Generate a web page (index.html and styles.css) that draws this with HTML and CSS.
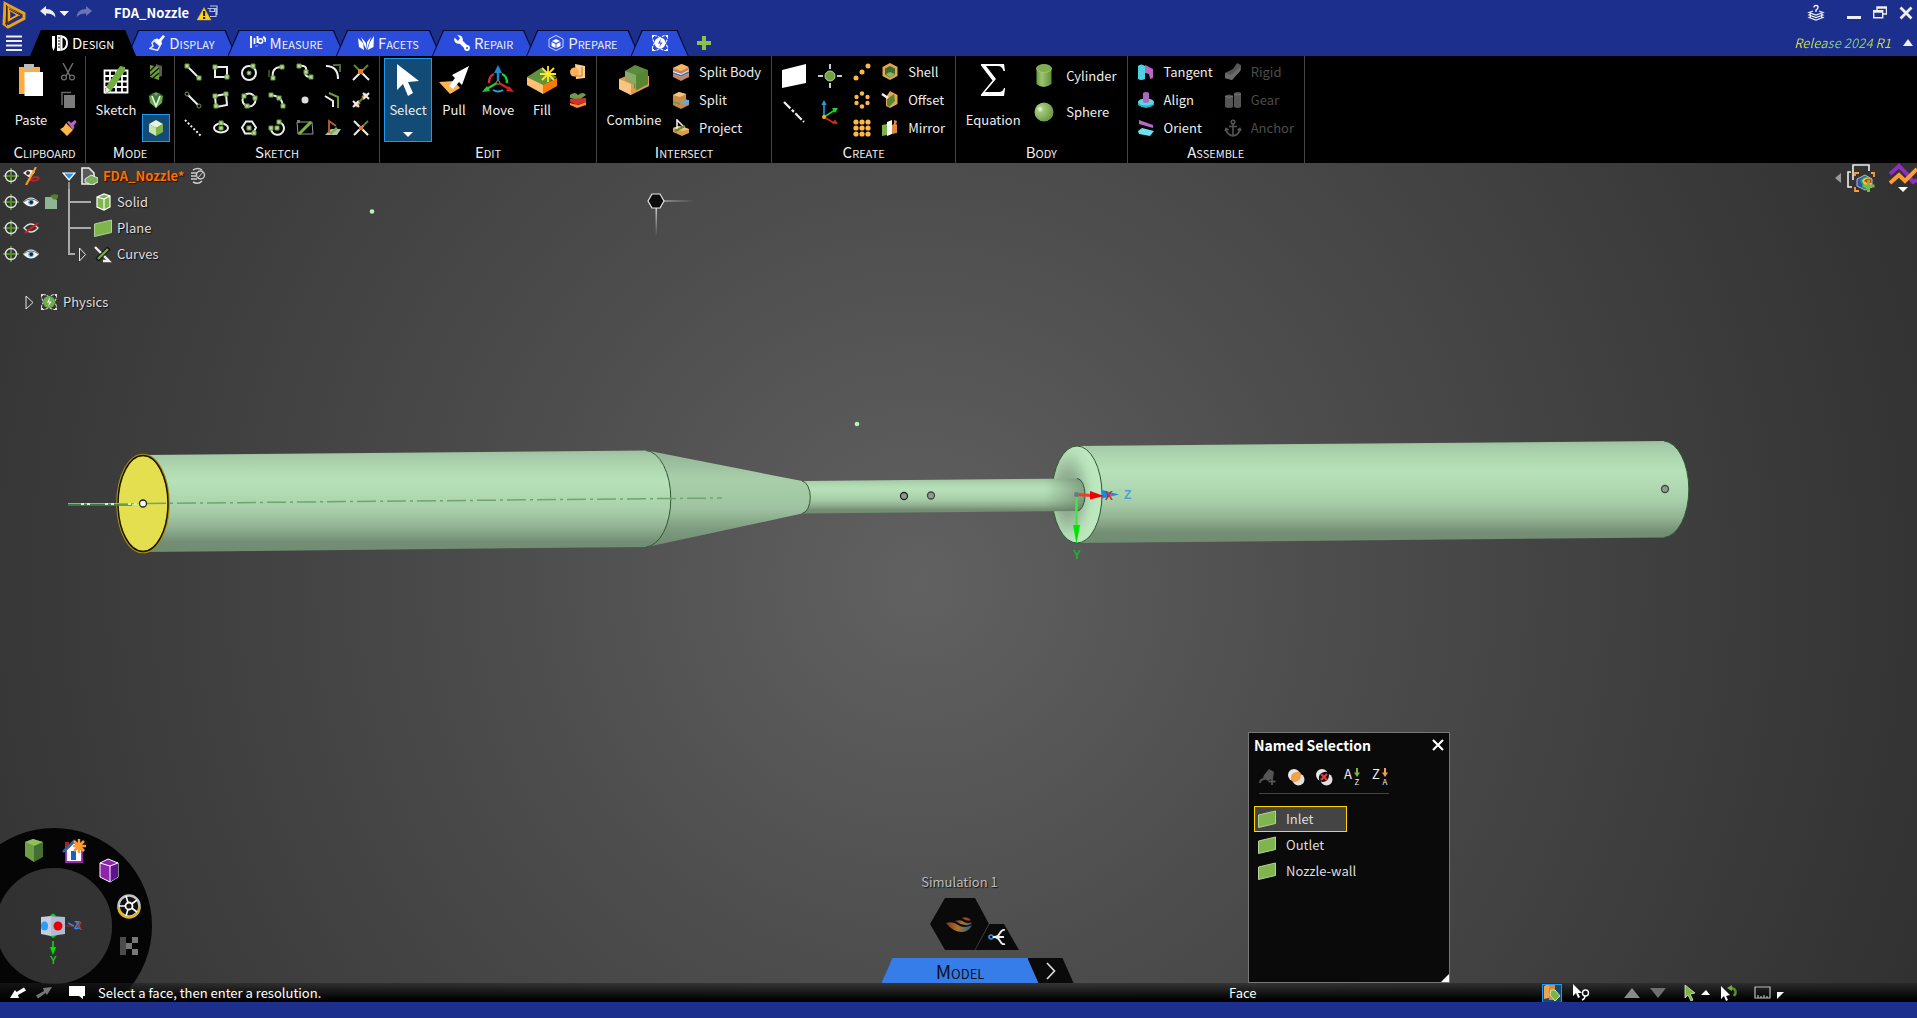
FILE: index.html
```html
<!DOCTYPE html>
<html lang="en">
<head>
<meta charset="utf-8">
<title>FDA_Nozzle</title>
<link rel="stylesheet" href="styles.css">
</head>
<body>
<svg class="defs" aria-hidden="true">
  <symbol id="target" viewBox="0 0 18 18"><path d="M9 1v16M1 9h16" stroke="#558b2f" stroke-width="2"/><circle cx="9" cy="9" r="5.500" fill="none" stroke="#e4e4e4" stroke-width="1.400"/></symbol>
  <symbol id="eye" viewBox="0 0 18 18"><path d="M1 9q8-9 16 0q-8 9-16 0z" fill="#f2f2f2"/><path d="M2 8.500q7-5 14 0" fill="none" stroke="#666" stroke-width="1"/><circle cx="9" cy="9.300" r="2.700" fill="#5aa7d6"/><circle cx="9.300" cy="9.300" r="1.700" fill="#222"/></symbol>
  <symbol id="plane" viewBox="0 0 18 18"><path d="M.5 5L17.500 1v12.500L.5 17.500z" fill="#80b44c" stroke="#b5cf9b" stroke-width="1"/></symbol>
  <symbol id="cursor" viewBox="0 0 24 32"><path d="M1 0v26l6-6 5 12 5-3-5-11 11-1z"/></symbol>
  <symbol id="atom" viewBox="0 0 18 18"><g fill="none" stroke="currentColor" stroke-width="1" stroke-dasharray="3 1"><ellipse cx="9" cy="9" rx="10" ry="4" transform="rotate(45 9 9)"/><ellipse cx="9" cy="9" rx="10" ry="4" transform="rotate(-45 9 9)"/></g><path d="M1 1h2v2H1zM15 1h2v2h-2zM1 15h2v2H1zM15 15h2v2h-2z" fill="currentColor"/></symbol>
</svg>

<header class="top">
  <div class="titlebar">
    <svg class="logo" viewBox="0 0 26 28"><path d="M4 2.500L23 12.500v5L7 26l-4-3z" fill="none" stroke="#e9a21d" stroke-width="3"/><path d="M8 8v11.500L17.500 14z" fill="#1c2f8c" stroke="#f9ab1e" stroke-width="2.500"/><path d="M5.500 4v21M8 8l12 6.500M4 23l14-8" fill="none" stroke="#3a2a10" stroke-width="1"/></svg>
    <button class="tool undo" aria-label="Undo"><svg width="30" height="14" viewBox="0 0 30 14"><path d="M6 0v3q9 0 9.500 8.500Q12 7 6 7.500V10L0 5z" fill="#eee"/><path d="M19.500 5h9.500l-4.700 5z" fill="#fff"/></svg></button>
    <button class="tool redo" aria-label="Redo"><svg width="16" height="14" viewBox="0 0 16 14"><path d="M10 0v3Q1 3 .5 11.500 4 7 10 7.500V10l6-5z" fill="#6975b3"/></svg></button>
    <h1>FDA_Nozzle</h1>
    <svg class="warn" width="22" height="18" viewBox="0 0 22 18"><path d="M10.500 4.500h8.500v8h-6M13 2h7v9M13 4.500v3h4.500v-3" fill="none" stroke="#b7c0e8" stroke-width="1.200"/><path d="M7 3.500L14 16H0z" fill="#ffd21f" stroke="#d8ac00" stroke-width=".5"/><path d="M6 7h2.200v5H6zM6 13h2.200v2H6z" fill="#222"/></svg>
    <div class="window-tools">
      <button class="tool" aria-label="Help"><svg width="18" height="18" viewBox="0 0 18 18"><path d="M7 3.500q0-2 2-2t2 1.700T9 6v2" fill="none" stroke="#eee" stroke-width="1.400"/><path d="M6 7L2 8.500 9 11l7-2.500L12 7M4 10l-2 1 7 2.500L16 11l-2-1M4 12.500l-2 1L9 16l7-2.500-2-1" fill="none" stroke="#eee" stroke-width="1.200"/></svg></button>
      <button class="tool min" aria-label="Minimize"><svg width="14" height="14" viewBox="0 0 14 14"><path d="M0 11.500h14" stroke="#eee" stroke-width="3"/></svg></button>
      <button class="tool" aria-label="Restore"><svg width="14" height="14" viewBox="0 0 14 14"><path d="M4 4V1h9.500v7H10M4 2h9M.7 4.700h9v7h-9zM1 6h9" fill="none" stroke="#eee" stroke-width="1.400"/></svg></button>
      <button class="tool" aria-label="Close"><svg width="14" height="14" viewBox="0 0 14 14"><path d="M1.500 1.500l11 11M12.500 1.500l-11 11" stroke="#eee" stroke-width="2.800"/></svg></button>
    </div>
  </div>
  <nav class="tabs">
    <button class="tool menu" aria-label="Menu"><svg width="16" height="16" viewBox="0 0 16 16"><path d="M0 1.500h16M0 6h16M0 10.500h16M0 15h16" stroke="#eee" stroke-width="2.200"/></svg></button>
    <button class="tab active"><svg width="16" height="16" viewBox="0 0 16 16"><path d="M0 1h3v11l-1.500 4L0 12zM5 0h3.500v16H5z" fill="#fff"/><path d="M6 3h2M6 6h2M6 9h2M6 12h2" stroke="#000"/><path d="M9.500 1.200q5.500 1 5.500 6.800t-5.500 6.800z" fill="none" stroke="#fff" stroke-width="2"/></svg><span>Design</span></button>
    <button class="tab"><svg width="16" height="16" viewBox="0 0 16 16"><path d="M5 5.500l6 5.500-2.500 4.300L1 13.500l3-2.500-1-3z" fill="none" stroke="#e4e9ff" stroke-width="1.500"/><path d="M5 4.500l3-1 2 1L14 0l2 1.500-3.500 4.500.5 3-2 2z" fill="#fff"/></svg><span>Display</span></button>
    <button class="tab"><svg width="16" height="16" viewBox="0 0 16 16"><path d="M1 1v12M4.500 3v6M7.500 1v7" stroke="#fff" stroke-width="1.800"/><circle cx="10.500" cy="6" r="2.200" fill="none" stroke="#fff" stroke-width="1.500"/><path d="M13 2q3 1 2.500 5" fill="none" stroke="#fff" stroke-width="2"/><path d="M5 11h3" stroke="#aab8ff"/></svg><span>Measure</span></button>
    <button class="tab"><svg width="16" height="16" viewBox="0 0 16 16"><path d="M0 3l5 5 1 7-5-3zM16 1l-4 6-2.500 8 6-3zM3 2l5 6 1 7-3-5zM13 2L9 7l0 7 2-6z" fill="#fff"/></svg><span>Facets</span></button>
    <button class="tab"><svg width="16" height="16" viewBox="0 0 16 16"><path d="M5 5l8 8" stroke="#fff" stroke-width="4"/><circle cx="4.500" cy="4.500" r="4.300" fill="#fff"/><path d="M-1 1l3-2 4 4-2 3z" fill="#2b4bdb"/><circle cx="13" cy="13" r="2.900" fill="#fff"/><circle cx="13" cy="13" r="1" fill="#2b4bdb"/></svg><span>Repair</span></button>
    <button class="tab"><svg width="16" height="16" viewBox="0 0 16 16"><path d="M8 .5l7 3.500v8l-7 3.500L1 12V4z" fill="none" stroke="#cfd7ff"/><path d="M8 4l4 2-4 2-4-2zM3.500 7L7.500 9v4l-4-2zM12.500 7L8.500 9v4l4-2z" fill="#fff"/></svg><span>Prepare</span></button>
    <button class="tab icon-only" aria-label="Simulation"><svg class="white" width="18" height="18" viewBox="0 0 18 18"><use href="#atom"/><circle cx="9" cy="9" r="5.500" fill="#fff"/><path d="M10 4.500L7 9.500h2.500L8 13.500l3.500-5H9z" fill="#2b4bdb"/></svg></button>
    <button class="tool add" aria-label="Add tab"><svg width="14" height="14" viewBox="0 0 14 14"><path d="M7 0v14M0 7h14" stroke="#8bc34a" stroke-width="4"/></svg></button>
    <span class="release">Release 2024 R1</span>
    <button class="tool" aria-label="Collapse ribbon"><svg width="10" height="8" viewBox="0 0 10 8"><path d="M5 0l5 7H0z" fill="#eee"/></svg></button>
  </nav>
</header>

<div class="ribbon">
  <section class="group clipboard">
    <div class="body">
      <button class="big low"><svg width="24" height="32" viewBox="0 0 24 32"><path d="M0 3h21v27H0z" fill="#ffab40"/><path d="M5 0h10v6H5z" fill="#bbb"/><path d="M5.500 8H24v24H5.500z" fill="#fff"/></svg>Paste</button>
      <div class="smalls">
        <button aria-label="Cut"><svg viewBox="0 0 18 18"><path d="M4 0l7 13M14 0L7 13" stroke="#6d6d6d" stroke-width="1.500"/><circle cx="5" cy="14.500" r="2.400" fill="none" stroke="#6d6d6d" stroke-width="1.300"/><circle cx="13" cy="14.500" r="2.400" fill="none" stroke="#6d6d6d" stroke-width="1.300"/></svg></button>
        <button aria-label="Copy"><svg viewBox="0 0 18 18"><path d="M3 14V1.500h9" fill="none" stroke="#666" stroke-width="1.500"/><path d="M5 4h11v13H5z" fill="#7c7c7c"/></svg></button>
        <button aria-label="Format painter"><svg viewBox="0 0 18 18"><path d="M7 4l7 7-6 6-7-7q4-1 6-6z" fill="#ffb74d"/><path d="M8 3l2-1 2 2 4-3 1.500 2-3 4 1 1-1.500 3z" fill="#ba68c8"/></svg></button>
      </div>
    </div>
    <h2>Clipboard</h2>
  </section>
  <section class="group mode">
    <div class="body">
      <button class="big"><svg width="26" height="30" viewBox="0 0 26 30"><path d="M1.500 5.500h23v22h-23zM1.500 11h23M1.500 16.500h23M1.500 22h23M7 5.500v22M13 5.500v22M19 5.500v22" fill="none" stroke="#fff" stroke-width="1.800"/><path d="M17 1l5 1v4L8 26l-6 3 1-7z" fill="#6fae3f"/><path d="M3 22l4 3-5 4z" fill="#eee"/></svg>Sketch</button>
      <div class="smalls">
        <button aria-label="Section"><svg viewBox="0 0 18 18"><path d="M9 1l6 2v10l-6 2z" fill="#5a5a5a"/><path d="M3 2l9 2v13l-9-3z" fill="#6ba03c"/><path d="M3 8l5-5M3 13l9-8M6 15l6-5" stroke="#111" stroke-width="1.300"/></svg></button>
        <button aria-label="Facet mode"><svg viewBox="0 0 18 18"><path d="M9 1l7 4-1 7-6 5-6-5-1-7z" fill="#69a84b"/><path d="M2 5l4 1 3 10 3-10 4-1-4-3-3 3-3-3z" fill="#3c7a44"/><path d="M5 5l4 10 4-10" fill="none" stroke="#eaf5e2" stroke-width="1.600"/></svg></button>
        <button class="on" aria-label="3D mode"><svg viewBox="0 0 18 18"><path d="M9 1l7 4-7 4-7-4z" fill="#e8f4dc"/><path d="M2 5l7 4v8l-7-4z" fill="#c9e3ae"/><path d="M16 5L9 9v8l7-4z" fill="#7cb342"/></svg></button>
      </div>
    </div>
    <h2>Mode</h2>
  </section>
  <section class="group sketch">
    <div class="body icons7">
      <button aria-label="Line"><svg viewBox="0 0 18 18"><path d="M3 3l12 12" class="w"/><path d="M1 1h4v4H1zM13 13h4v4h-4z" class="g"/></svg></button>
      <button aria-label="Rectangle"><svg viewBox="0 0 18 18"><path d="M3 4h12v10H3z" class="w"/><path d="M1 2h4v4H1zM13 12h4v4h-4z" class="g"/></svg></button>
      <button aria-label="Circle"><svg viewBox="0 0 18 18"><circle cx="9" cy="10" r="7" class="w"/><circle cx="9" cy="10" r="2" class="g"/><path d="M11 1h4v4h-4z" class="g"/></svg></button>
      <button aria-label="Arc"><svg viewBox="0 0 18 18"><path d="M5 15Q3 4 14 4" class="w"/><path d="M1 7v7M12 2h4v4h-4zM3 13h4v4H3z" class="g"/></svg></button>
      <button aria-label="Spline"><svg viewBox="0 0 18 18"><path d="M3 3q8-1 7 4-3 7 5 7" class="w"/><path d="M1 1h4v4H1zM8 7h4v4H8zM13 12h4v4h-4z" class="g"/></svg></button>
      <button aria-label="Fillet"><svg viewBox="0 0 18 18"><path d="M9 2h7v7" fill="none" stroke="#4d6b2a" stroke-width="2"/><path d="M2 3q12 0 12 13" class="w"/></svg></button>
      <button aria-label="Trim"><svg viewBox="0 0 18 18"><path d="M2 2l7 7 7-7" fill="none" stroke="#57862f" stroke-width="2"/><path d="M1 17l8-8 8 8" class="w"/><path d="M6 6h5v5H6z" fill="#e8762c"/></svg></button>
      <button aria-label="Tangent line"><svg viewBox="0 0 18 18"><path d="M4 4l10 10" class="w"/><circle cx="3" cy="3" r="2" class="go"/><circle cx="15" cy="15" r="2" class="go"/></svg></button>
      <button aria-label="Three-point rectangle"><svg viewBox="0 0 18 18"><path d="M3 5l11-2 1 11-11 2z" class="w"/><path d="M1 3h4v4H1zM12 1h4v4h-4zM2 13h4v4H2z" class="g"/></svg></button>
      <button aria-label="Three-point circle"><svg viewBox="0 0 18 18"><circle cx="9" cy="9" r="6.500" class="w"/><path d="M2 3h4v4H2zM13 5h4v4h-4zM5 13h4v4H5z" class="g"/></svg></button>
      <button aria-label="Three-point arc"><svg viewBox="0 0 18 18"><path d="M3 4q11 1 12 11" class="w"/><path d="M1 2h4v4H1zM9 5h4v4H9zM13 13h4v4h-4z" class="g"/></svg></button>
      <button aria-label="Point"><svg viewBox="0 0 18 18"><circle cx="9" cy="9" r="3.500" fill="#ddd"/></svg></button>
      <button aria-label="Offset curve"><svg viewBox="0 0 18 18"><path d="M5 2l9 4v11" fill="none" stroke="#6a9a3a" stroke-width="2"/><path d="M1 5l8 5v6" class="w"/></svg></button>
      <button aria-label="Project point"><svg viewBox="0 0 18 18"><path d="M3 15L15 3" stroke="#e8762c" stroke-width="4" stroke-dasharray="6 5"/><path d="M1 10l6 6M7 10l-6 6M11 2l6 6M17 2l-6 6" class="w"/><path d="M7 11l4-4" stroke="#558b2f" stroke-width="2"/></svg></button>
      <button aria-label="Construction line"><svg viewBox="0 0 18 18"><path d="M1 1l16 16" class="w" stroke-dasharray="2 2"/></svg></button>
      <button aria-label="Ellipse"><svg viewBox="0 0 18 18"><ellipse cx="9" cy="9" rx="7" ry="4.500" class="w"/><path d="M7 2h4v4H7zM7 7.500h4v3.500H7z" class="g"/></svg></button>
      <button aria-label="Polygon"><svg viewBox="0 0 18 18"><path d="M6 2.500h6l4 6-3 6H5l-3-6z" class="w"/><path d="M7 7h4v4H7zM12 12h4v4h-4z" class="g"/></svg></button>
      <button aria-label="Sweep arc"><svg viewBox="0 0 18 18"><path d="M3 9a6.500 6.500 0 1 0 8-6" class="w"/><path d="M1 7h4v4H1zM7 7h4v4H7zM9 1h4v4H9z" class="g"/></svg></button>
      <button aria-label="Face curve"><svg viewBox="0 0 18 18"><path d="M1 3h15l1 12H2z" fill="none" stroke="#999"/><path d="M1 1h3v3H1z" fill="#777"/><path d="M3 15L15 3" stroke="#7cb342" stroke-width="3"/></svg></button>
      <button aria-label="Project to sketch"><svg viewBox="0 0 18 18"><path d="M1 16l6-6h10l-4 6z" fill="#bbb"/><path d="M5 14V2l7 5" fill="none" stroke="#b5652a" stroke-width="1.800"/><path d="M6 15l7-6" stroke="#7cb342" stroke-width="2.500"/></svg></button>
      <button aria-label="Split curve"><svg viewBox="0 0 18 18"><path d="M9 9l7-7M9 9l7 7" stroke="#57862f" stroke-width="2"/><path d="M2 2l14 14M2 16l9-9" class="w"/><path d="M7 7h4v4H7z" fill="#e8762c"/></svg></button>
    </div>
    <h2>Sketch</h2>
  </section>
  <section class="group edit">
    <div class="body">
      <button class="big on select"><svg width="24" height="32" fill="#fff"><use href="#cursor"/></svg>Select<svg class="drop" width="10" height="5" viewBox="0 0 10 5"><path d="M0 0h10L5 5z" fill="#fff"/></svg></button>
      <button class="big"><svg width="32" height="30" viewBox="0 0 32 30"><path d="M1 17l15-1 6 7-10 6z" fill="#ffb74d"/><path d="M31 1L14 10l3 3-6 8 4 3 6-7 3 3z" fill="#fff"/></svg>Pull</button>
      <button class="big"><svg width="32" height="30" viewBox="0 0 32 30"><g fill="none" stroke-width="2.400"><path d="M16 17V5" stroke="#1e88d0"/><path d="M15 18L3 25" stroke="#2bc33a"/><path d="M17 18l12 7" stroke="#c62828"/><path d="M7 18q0-7 5-9" stroke="#d32f2f"/><path d="M25 18q0-7-5-9" stroke="#18d030"/><path d="M11 25q5 3 10 0" stroke="#29a0e8" stroke-width="2"/></g><path d="M16 0l4 8h-8z" fill="#1e88d0"/><path d="M0 27l5-6 3 5z" fill="#2bc33a"/><path d="M32 27l-5-6-3 5z" fill="#c62828"/><circle cx="16" cy="17.500" r="1.700" fill="#000" stroke="#b98b20"/></svg>Move</button>
      <button class="big"><svg width="32" height="30" viewBox="0 0 32 30"><path d="M1 12L15 3l16 9-14 9z" fill="#5e9440"/><path d="M1 12v8l16 9v-9z" fill="#ffc074"/><path d="M31 13v8l-14 8v-9z" fill="#f57c00"/><path d="M22 1v16M14 9h16M16 3l12 12M28 3L16 15" stroke="#ffe52e" stroke-width="1.800"/></svg>Fill</button>
      <div class="smalls">
        <button aria-label="Blend"><svg viewBox="0 0 18 18"><path d="M6 1l10 2v12l-9 1z" fill="#ffcf8f"/><circle cx="5.500" cy="9" r="4.500" fill="#ffb055"/><path d="M6 13h7V4" fill="none" stroke="#c77a1d"/></svg></button>
        <button aria-label="Replace"><svg viewBox="0 0 18 18"><path d="M1 4q5-4 8 0 5-4 8 0l-7 5-9-2z" fill="#6a9e4a"/><path d="M1 8l16-1v4l-9 3-7-3z" fill="#d32f2f"/><path d="M1 12l8 2 8-3v3l-9 3-7-3z" fill="#ff8f2a"/></svg></button>
      </div>
    </div>
    <h2>Edit</h2>
  </section>
  <section class="group intersect">
    <div class="body">
      <button class="big low"><svg width="32" height="32" viewBox="0 0 32 32"><path d="M1 15l12-5 18 2v10l-18 9-12-6z" fill="#e09a48"/><path d="M1 15l12 5v11L1 25z" fill="#f9c583"/><path d="M7 7l10-6 13 5v14l-11 6-3-2v-4l-9-4z" fill="#5b8c3e"/><path d="M7 7l11 4v14l-1 0v-5l-10-4z" fill="#8aaa6c"/><path d="M18 11l12-5v14l-12 6z" fill="#56862f"/></svg>Combine</button>
      <div class="list">
        <button><svg viewBox="0 0 18 18"><path d="M1 5l8-4 8 4v9l-8 4-8-4z" fill="#c9845a"/><path d="M1 5l9-4 7 3-8 4z" fill="#f6b765"/><path d="M1 8l8 3 8-4v3l-8 4-8-3z" fill="#e3ecf8"/><path d="M1 10l8 3 8-4" fill="none" stroke="#2c6fb5" stroke-width="1.500"/></svg>Split Body</button>
        <button><svg viewBox="0 0 18 18"><path d="M1 4l6-3 7 2v5l3 2v4l-8 4-8-4z" fill="#c98b45"/><path d="M1 4l6-3 7 2-6 3z" fill="#f8c47c"/><path d="M1 10l7 2v2l-7-2z" fill="#6c9d3c"/><path d="M8 10l9-1v3l-6 2z" fill="#64a7e8"/></svg>Split</button>
        <button><svg viewBox="0 0 18 18"><path d="M1 9l6-2 10 3v4l-7 3-9-4z" fill="#d99a52"/><path d="M1 9l6-2 10 3-6 2z" fill="#f8c47c"/><path d="M5 11V1l8 8" fill="none" stroke="#e8eef8" stroke-width="1.600"/><path d="M3 12l10-5" stroke="#5d8e31" stroke-width="2"/></svg>Project</button>
      </div>
    </div>
    <h2>Intersect</h2>
  </section>
  <section class="group create">
    <div class="body">
      <div class="quad">
        <button aria-label="Plane"><svg viewBox="0 0 24 24"><path d="M0 6L24 0v19L0 24z" fill="#fff"/></svg></button>
        <button aria-label="Origin"><svg viewBox="0 0 24 24"><path d="M12 0v5M12 19v5M0 12h5M19 12h5" stroke="#ccc" stroke-width="2"/><circle cx="12" cy="12" r="5" fill="#6da341" stroke="#b8d99a"/></svg></button>
        <button aria-label="Axis"><svg viewBox="0 0 24 24"><path d="M2 2l20 20" stroke="#eee" stroke-width="2.200" stroke-dasharray="9 2 3 2"/></svg></button>
        <button aria-label="Coordinate system"><svg viewBox="0 0 24 24"><path d="M6 17V4" stroke="#2a9fe0" stroke-width="1.600"/><path d="M6 17l11-7" stroke="#25d030" stroke-width="1.600"/><path d="M6 17l10 6" stroke="#e52222" stroke-width="1.600"/><path d="M6 0l2.500 5h-5z" fill="#2a9fe0"/><path d="M20 8l-6 0 3 5z" fill="#25d030"/><path d="M20 24l-6-.5 3-4z" fill="#e52222"/><circle cx="6" cy="17" r="2" fill="#ffb300"/></svg></button>
      </div>
      <div class="smalls orange">
        <button aria-label="Linear pattern"><svg viewBox="0 0 18 18"><circle cx="3" cy="15" r="2.500"/><circle cx="9" cy="9" r="2.500"/><circle cx="15" cy="3" r="2.500"/></svg></button>
        <button aria-label="Circular pattern"><svg viewBox="0 0 18 18"><circle cx="9" cy="2.500" r="2.200"/><circle cx="9" cy="15.500" r="2.200"/><circle cx="3.500" cy="6" r="2.200"/><circle cx="3.500" cy="12" r="2.200"/><circle cx="14.500" cy="6" r="2.200"/><circle cx="14.500" cy="12" r="2.200"/></svg></button>
        <button aria-label="Fill pattern"><svg viewBox="0 0 18 18"><circle cx="3" cy="3" r="2.600"/><circle cx="9" cy="3" r="2.600"/><circle cx="15" cy="3" r="2.600"/><circle cx="3" cy="9" r="2.600"/><circle cx="9" cy="9" r="2.600"/><circle cx="15" cy="9" r="2.600"/><circle cx="3" cy="15" r="2.600"/><circle cx="9" cy="15" r="2.600"/><circle cx="15" cy="15" r="2.600"/></svg></button>
      </div>
      <div class="list">
        <button><svg viewBox="0 0 18 18"><path d="M9 0l7.500 4v9L9 17l-7.500-4V4z" fill="#e9a552"/><path d="M9 3l5 2.500v6L9 15l-5-3.500v-6z" fill="#41682f"/><path d="M5 11l4-2 5 2-5 4z" fill="#85b85a"/></svg>Shell</button>
        <button><svg viewBox="0 0 18 18"><path d="M9 0l7.500 4v9L9 17l-4-2V6z" fill="#e9a552"/><path d="M6 8l7-5 1 7-6 6-2-2z" fill="#56862f"/><path d="M1 3l6 4" stroke="#eee" stroke-width="2.500"/></svg>Offset</button>
        <button><svg viewBox="0 0 18 18"><path d="M1 6l5-1v11l-5 1z" fill="#7cb342"/><path d="M6 3l5-2v14l-5 2z" fill="#fff"/><path d="M11 6l2-1V1l3 1-1 4 1-1v9l-5 1z" fill="#e08a3c"/></svg>Mirror</button>
      </div>
    </div>
    <h2>Create</h2>
  </section>
  <section class="group solids">
    <div class="body">
      <button class="big low"><svg width="24" height="32" viewBox="0 0 24 32"><path d="M0 0h23l1 7h-1.500Q21 2 17 2H5l10 13L4 28h14q4 0 5-4h1.200L23 32H0v-1.500l11.500-14L0 1.500z" fill="#fff"/></svg>Equation</button>
      <div class="list pair">
        <button><svg viewBox="0 0 20 24"><path d="M2.500 4v16q7 6 15 0V4z" fill="url(#gcyl)"/><ellipse cx="10" cy="4.500" rx="7.500" ry="4" fill="#7fae4e" stroke="#a8cd80" stroke-width=".7"/></svg>Cylinder</button>
        <button><svg viewBox="0 0 20 24"><circle cx="10" cy="12" r="9.500" fill="url(#gsph)"/></svg>Sphere</button>
      </div>
    </div>
    <h2>Body</h2>
  </section>
  <section class="group assemble">
    <div class="body">
      <div class="list">
        <button><svg viewBox="0 0 18 18"><path d="M1 3q3-3 7 0v13q-4 2-7 0z" fill="#4dd0e1"/><path d="M8 2l8 4v9l-3 1-1-5-4-1z" fill="#ba68c8"/></svg>Tangent</button>
        <button><svg viewBox="0 0 18 18"><path d="M1 11q8-5 16 0v3q-8 6-16 0z" fill="#26b0c4"/><ellipse cx="9" cy="11" rx="8" ry="3.500" fill="#5ad6e6"/><path d="M6 2q3-2 6 0v9q-3 2-6 0z" fill="#b066c0"/></svg>Align</button>
        <button><svg viewBox="0 0 18 18"><path d="M2 1l14 5v3L2 5z" fill="#ba68c8"/><path d="M1 12l4-3 12 3-4 5-11-2z" fill="#6fe0ee"/></svg>Orient</button>
      </div>
      <div class="list">
        <button disabled><svg viewBox="0 0 18 18"><path d="M1 10l8-4 4-6 4 2v5l-9 10-7-2z" fill="#555"/><path d="M1 10l6 2 9-8v4l-8 9-7-2z" fill="#6a6a6a"/></svg>Rigid</button>
        <button disabled><svg viewBox="0 0 18 18"><path d="M1 5q4-3 8 0v11q-4 2-8 0zM10 2q4-2 7 0v14q-3 2-7 0z" fill="#555"/><path d="M1 5q4 3 8 0M10 3q3 2 7 0" fill="none" stroke="#777"/></svg>Gear</button>
        <button disabled><svg viewBox="0 0 18 18"><circle cx="9" cy="3" r="1.800" fill="none" stroke="#555" stroke-width="1.500"/><path d="M9 5v11M5 7.500h8M2 10q1 6 7 7 6-1 7-7M1 12l1-2.500 2.500 1.500M17 12l-1-2.500-2.500 1.500" fill="none" stroke="#555" stroke-width="1.600"/></svg>Anchor</button>
      </div>
    </div>
    <h2>Assemble</h2>
  </section>
</div>

<main class="viewport">
  <svg class="scene" viewBox="0 163 1917 839" preserveAspectRatio="xMidYMid slice">
    <defs>
      <linearGradient id="pipe" x1="0" y1="0" x2="0" y2="1"><stop offset="0" stop-color="#9cbf9e"/><stop offset=".05" stop-color="#a4caa6"/><stop offset=".17" stop-color="#afd8b0"/><stop offset=".3" stop-color="#b7e1b9"/><stop offset=".45" stop-color="#b0d9b1"/><stop offset=".6" stop-color="#a6cda7"/><stop offset=".75" stop-color="#93b393"/><stop offset=".9" stop-color="#738e74"/><stop offset="1" stop-color="#708c71"/></linearGradient>
      <linearGradient id="cone" x1="0" y1="0" x2="0" y2="1"><stop offset="0" stop-color="#92b294"/><stop offset=".3" stop-color="#a8cfaa"/><stop offset=".6" stop-color="#9fc3a0"/><stop offset=".8" stop-color="#7f9e80"/><stop offset="1" stop-color="#6d876e"/></linearGradient>
      <radialGradient id="well" cx=".32" cy=".5" r=".55"><stop offset="0" stop-color="#849e85"/><stop offset=".4" stop-color="#93b294"/><stop offset=".8" stop-color="#b5dfb7"/><stop offset="1" stop-color="#bde8bf"/></radialGradient>
      <linearGradient id="shade"><stop offset="0" stop-color="#5e765f" stop-opacity="0"/><stop offset="1" stop-color="#5e765f" stop-opacity=".6"/></linearGradient>
      <linearGradient id="fadeX" gradientUnits="userSpaceOnUse" x1="664" y1="0" x2="694" y2="0"><stop offset="0" stop-color="#ccc"/><stop offset="1" stop-color="#ccc" stop-opacity="0"/></linearGradient>
      <linearGradient id="fadeY" gradientUnits="userSpaceOnUse" x1="0" y1="208" x2="0" y2="236"><stop offset="0" stop-color="#ccc"/><stop offset="1" stop-color="#ccc" stop-opacity="0"/></linearGradient>
      <linearGradient id="gcyl"><stop offset="0" stop-color="#6d9a40"/><stop offset=".35" stop-color="#9cc56e"/><stop offset="1" stop-color="#638f38"/></linearGradient>
      <radialGradient id="gsph" cx=".3" cy=".35" r=".7"><stop offset="0" stop-color="#f3faea"/><stop offset=".25" stop-color="#a3c77c"/><stop offset="1" stop-color="#6d9a44"/></radialGradient>
    </defs>
    <path d="M1077 446L1664 441A26 48.300 0 0 1 1664 537.500L1077 543z" fill="url(#pipe)"/>
    <path d="M1664 441A26 48.300 0 0 1 1664 537.500" fill="none" stroke="#2f5a33"/>
    <ellipse cx="1077" cy="494.500" rx="25" ry="48.500" fill="url(#well)" stroke="#2f5a33"/>
    <path d="M802 481L1077 478.500A8 16.200 0 0 1 1077 511L802 513.500z" fill="url(#pipe)"/>
    <path d="M1045 479L1077 478.500A8 16.200 0 0 1 1077 511L1045 511.500z" fill="url(#shade)"/>
    <path d="M1077 478.500A8 16.200 0 0 1 1077 511" fill="none" stroke="#2f5a33"/>
    <path d="M647 450.500L802 481A9 16.300 0 0 1 802 513.500L647 547z" fill="url(#cone)"/>
    <path d="M802 481A9 16.300 0 0 1 802 513.500" fill="none" stroke="#2f5a33"/>
    <path d="M143 455L646 450.500A26 48.300 0 0 1 646 547L143 552z" fill="url(#pipe)"/>
    <path d="M646 450.500A26 48.300 0 0 1 646 547" fill="none" stroke="#2f5a33"/>
    <ellipse cx="143" cy="503.500" rx="25.500" ry="48.500" fill="#e3df4f" stroke="#a88d12" stroke-width="2.600"/>
    <ellipse cx="143" cy="503.500" rx="25" ry="48" fill="none" stroke="#151505" stroke-width="1.400"/>
    <path d="M68 503.500H138" stroke="#83b885"/>
    <path d="M68 505H132" stroke="#3f8a4c" stroke-width="1.500"/>
    <path d="M81 504h9M105 504h9M128 504h10" stroke="#c9f5ca" stroke-width="2" stroke-dasharray="3 3"/>
    <path d="M147 503.500L722 498" stroke="#6fa573" stroke-width="1.500" stroke-dasharray="19 4 3 4"/>
    <circle cx="143" cy="503.500" r="3.500" fill="#fff" stroke="#222" stroke-width="1.300"/>
    <g fill="#8f9b90" stroke="#222" stroke-width="1.300"><circle cx="904" cy="496" r="3.500"/><circle cx="931" cy="495.500" r="3.500" stroke="#444"/><circle cx="1665" cy="489" r="3.500" stroke="#3d4a3e"/></g>
    <g fill="#b7f5bb"><circle cx="857" cy="424" r="2.300"/><circle cx="372" cy="211.500" r="2.300"/></g>
    <path d="M1103 494.500h8" stroke="#4a7f9a" stroke-width="2"/><path d="M1102 490l17 4.500-17 4z" fill="#1e88e5"/>
    <path d="M1077 494.500l14 1" stroke="#f23b2f" stroke-width="3"/><path d="M1090 491l14 5-14 3.500z" fill="#f00000"/>
    <path d="M1076.500 497v28" stroke="#3fe83f" stroke-width="2.500"/><path d="M1073 525h7l-3.500 19z" fill="#00e600"/>
    <circle cx="1076.500" cy="494.500" r="2.500" fill="#777"/>
    <g class="axis-names"><text x="1105" y="500" fill="#c33">X</text><text x="1124" y="499" fill="#4d9fd6">Z</text><text x="1073" y="559" fill="#1fae2a">Y</text></g>
    <path d="M664 200.500h30v1h-30z" fill="url(#fadeX)"/><path d="M655.500 208h1.500v28h-1.500z" fill="url(#fadeY)"/>
    <path d="M652 194h8l4 7-4 7h-8l-4-7z" fill="#0b0b0b" stroke="#e8e8e8" stroke-width="1.200"/>
  </svg>

  <ul class="tree">
    <li><svg><use href="#target"/></svg><svg viewBox="0 0 18 18"><path d="M1 6q6-6 12-1l-5 6z" fill="#eee"/><circle cx="6" cy="6" r="2" fill="#333"/><path d="M8 13q5-5 9-2-2 4-9 2z" fill="none" stroke="#c62828" stroke-width="1.500"/><path d="M14 0L4 18" stroke="#ff9c27" stroke-width="2"/></svg><span></span><svg class="caret" viewBox="0 0 14 26"><path d="M1 10h12l-6 7z" fill="#2196f3" stroke="#fff" stroke-width="1.200"/><path d="M7 19v7" stroke="#aaa" stroke-width="1.500"/></svg><svg class="doc" viewBox="0 0 18 18"><path d="M2 1h7l5 5v11H2z" fill="#5a5a5a" stroke="#eee" stroke-width="1.600"/><path d="M5 12l6-4 7 3v4l-6 3-7-3z" fill="#7fae60" stroke="#dfe8d8"/></svg><strong>FDA_Nozzle*</strong><svg class="sync" viewBox="0 0 18 18"><path d="M2 6h6M2 9h5M2 12h6M4 3q5-3 9 0M4 15q5 3 9-1" fill="none" stroke="#ccc" stroke-width="1.500"/><circle cx="11.500" cy="8" r="4" fill="none" stroke="#ccc" stroke-width="1.400"/><path d="M9 11l5-6" stroke="#ccc"/></svg></li>
    <li><svg><use href="#target"/></svg><svg><use href="#eye"/></svg><svg viewBox="0 0 18 18"><path d="M3 4h8l4 3v9H3z" fill="#8fb493"/><path d="M8 3q4-3 8-1v3q-4 3-6 0z" fill="#55812f"/></svg><svg class="branch" viewBox="0 0 32 26"><path d="M7 0v26M7 13h22"/></svg><svg viewBox="0 0 18 18"><path d="M3 4l7-3 6 2v11l-6 3-7-3z" fill="#80b44c" stroke="#fff" stroke-width="1.200"/><path d="M3 4l7 2 6-3M10 6v11" fill="none" stroke="#fff" stroke-width="1.200"/></svg><b>Solid</b></li>
    <li><svg><use href="#target"/></svg><svg viewBox="0 0 18 18"><path d="M2 9q7-8 14 0-7 8-14 0z" fill="none" stroke="#ddd" stroke-width="1.400"/><path d="M3 14L16 4" stroke="#d32020" stroke-width="2"/></svg><span></span><svg class="branch" viewBox="0 0 32 26"><path d="M7 0v26M7 13h22"/></svg><svg><use href="#plane"/></svg><b>Plane</b></li>
    <li><svg><use href="#target"/></svg><svg><use href="#eye"/></svg><span></span><svg class="branch" viewBox="0 0 32 26"><path d="M7 0v13h6"/><path class="tri" d="M17.500 7l6 6.500-6 6.500z"/></svg><svg viewBox="0 0 18 18"><path d="M1 2l14 14H9" fill="none" stroke="#eee" stroke-width="2.400"/><path d="M3 15L15 3" stroke="#111" stroke-width="4.500"/><path d="M4 14L14 4" stroke="#6fae3f" stroke-width="2.400"/></svg><b>Curves</b></li>
    <li class="physics"><svg class="caret" viewBox="0 0 14 26"><path class="tri" d="M4 7l7 6.500L4 20z"/></svg><svg class="light" viewBox="0 0 18 18"><use href="#atom"/><circle cx="9" cy="9" r="6" fill="#6fae4a"/><path d="M10 4L7 9.500h2.500L8 14l3.500-5.500H9z" fill="#fff"/></svg><b>Physics</b></li>
  </ul>

  <div class="corner">
    <button class="tool" aria-label="Previous"><svg width="6" height="10" viewBox="0 0 6 10"><path d="M6 0v10L0 5z" fill="#999"/></svg></button>
    <button class="tool" aria-label="Add result"><svg width="30" height="30" viewBox="0 0 30 30"><path d="M7 17V2h16v6M5 9H2v15h4" fill="none" stroke="#eee" stroke-width="1.600"/><path d="M9 13v-3h4M25 10h3v4M9 24v4h4" fill="none" stroke="#ff9c3a" stroke-width="1.800"/><path d="M11 16l8-4 7 4v8l-7 3-8-4z" fill="#2c50b8"/><path d="M14 18q1-4 7-5l5 3v8l-7 3z" fill="#18a06a"/><path d="M16 18q2-4 7-3l3 2v5l-6 3z" fill="#e5d02c"/><path d="M18 18q2-3 6-2l2 1v3l-5 0z" fill="#e63022"/><path d="M11 16l8-4 7 4v8l-7 3-8-4z" fill="none" stroke="#bbb"/><path d="M22.500 17v12M16.500 23h12" stroke="#76b944" stroke-width="3"/></svg></button>
    <button class="tool" aria-label="Charts"><svg width="28" height="30" viewBox="0 0 28 30"><path d="M1 11l9-8 8 8 6 8 4-2" fill="none" stroke="#8e2fc4" stroke-width="4"/><path d="M1 20l9-8 6 6 12-12" fill="none" stroke="#ff9a35" stroke-width="4"/><path d="M9 24h10l-5 5z" fill="#fff"/></svg></button>
  </div>

  <svg class="dial" width="154" height="174" viewBox="0 0 154 174">
    <circle cx="54" cy="98" r="78" fill="none" stroke="#050505" stroke-width="40"/>
    <circle cx="54" cy="98" r="58" fill="#2e2e2e" fill-opacity=".5"/>
    <path d="M25 14l8-3 10 3v15l-9 5-9-6z" fill="#456f30"/><path d="M25 14l9 4v16l-9-6z" fill="#6f9c46"/><path d="M25 14l8-3 10 3-9 4z" fill="#8fc05e"/>
    <path d="M65 14h4v8h-4z" fill="#b71c1c"/><path d="M66 23l8-8 8 8v11H66z" fill="#fff"/><path d="M66 23v11h16V23" fill="none" stroke="#9c27b0" stroke-width="1.800"/><path d="M63 24L74 13l10 10" fill="none" stroke="#2166b8" stroke-width="2.500"/><path d="M71 23h5v9h-5z" fill="#1565c0"/><path d="M79 11v14M73 18h13M74 13l10 10M84 13L74 23" stroke="#ff9a35" stroke-width="2.500"/>
    <path d="M100 35l8-4 10 4v14l-8 5-10-5z" fill="#8e24aa" stroke="#fff"/><path d="M110 38l8-3v14l-8 5z" fill="#5e1290"/><path d="M100 35l10 3 8-3M110 38v16" fill="none" stroke="#fff"/>
    <circle cx="129" cy="78" r="10.500" fill="#111" stroke="#c5c5c5" stroke-width="2.500"/><path d="M118.500 79a10.500 10.500 0 0 0 21 0" fill="none" stroke="#e2b71c" stroke-width="2.500"/><path d="M129 78l-3-10M129 78l8-6M129 78l8 6M129 78l-3 10M129 78h-10" stroke="#fff" stroke-width="1.600"/><circle cx="129" cy="78" r="3.500" fill="#111" stroke="#fff" stroke-width="1.800"/>
    <path d="M120 109h6v18h-6z" fill="#4c4c4c"/><path d="M126 115h6v6h-6zM132 109h6v6h-6zM132 121h6v6h-6z" fill="#777"/>
    <path d="M50 88q3-5 6 0zM49 107h8l-4 3z" fill="#00d800"/><path d="M41 89l10-1v20l-10-2z" fill="#c3cfe0"/><path d="M51 88l14 1v17l-14 2z" fill="#aebcd6"/>
    <ellipse cx="44.500" cy="98" rx="3.500" ry="4.500" fill="#29a0f5"/><circle cx="58" cy="98" r="4.500" fill="#e80000"/><path d="M65 98h8" stroke="#8c2020" stroke-width="2"/><path d="M68 95l6 3" stroke="#2a8fe0" stroke-width="1.500"/>
    <path d="M53 113v8" stroke="#0e0" stroke-width="1.500"/><path d="M50 119h6l-3 8z" fill="#00e600"/>
    <g class="axis-names small"><text x="75" y="102" fill="#c33">X</text><text x="74" y="101" fill="#2a8fe0">Z</text><text x="50" y="136" fill="#1fbf2a">Y</text></g>
  </svg>

  <div class="workflow">
    <span class="sim">Simulation 1</span>
    <svg class="hexes" width="90" height="52" viewBox="0 0 90 52"><defs><linearGradient id="flame"><stop offset="0" stop-color="#8e2b1e"/><stop offset=".45" stop-color="#a8762b"/><stop offset="1" stop-color="#2b5f80"/></linearGradient></defs><path d="M15 0h30l14 26-14 26H15L0 26z" fill="#0a0a0a"/><path d="M59.500 26H74l15 26H45z" fill="#0a0a0a"/><path d="M59 26L45 52" stroke="#444" stroke-width=".7"/><path d="M16 25q7-2 12 2 6 4 14 0-3 7-10 7-9 0-16-9z" fill="url(#flame)"/><path d="M25 23q6-2 9 1 4 2 8 0-2 4-7 3-6-1-10-4z" fill="url(#flame)"/><path d="M32 20q5-2 9 2-4 2-9-2z" fill="#a0441f"/><circle cx="61" cy="39" r="2" fill="none" stroke="#3b8fd6" stroke-width="1.600"/><path d="M63 39h11M64 39q4 0 6-4t5-3M64 39q4 0 6 4t5 3" fill="none" stroke="#eee" stroke-width="1.800"/></svg>
    <div class="stage"><button class="model">Model</button><button class="next" aria-label="Next stage"><svg width="10" height="18" viewBox="0 0 10 18"><path d="M1 1l7.500 8L1 17" fill="none" stroke="#ddd" stroke-width="1.700"/></svg></button></div>
  </div>

  <section class="panel">
    <div class="panel-head"><h2>Named Selection</h2><button class="tool" aria-label="Close panel"><svg width="12" height="12" viewBox="0 0 12 12"><path d="M1 1l10 10M11 1L1 11" stroke="#fff" stroke-width="2.200"/></svg></button></div>
    <div class="panel-tools">
      <button aria-label="Create"><svg viewBox="0 0 18 18"><path d="M5 7l5-6 5 3-1 6-5 3-5-3z" fill="#555"/><path d="M1 15q0-4 5-4M13 10v7M9.500 13.500h7" fill="none" stroke="#555" stroke-width="1.800"/></svg></button>
      <button aria-label="Union"><svg viewBox="0 0 18 18"><circle cx="7" cy="7" r="6" fill="#e8e8e8"/><circle cx="11.500" cy="11.500" r="6" fill="#e0e0e0"/><path d="M4 12Q3 5 9 4q5-1 5 3 0 6-6 7-3 0-4-2z" fill="#f0a24a"/></svg></button>
      <button aria-label="Remove"><svg viewBox="0 0 18 18"><circle cx="7" cy="7" r="6" fill="#e8e8e8"/><circle cx="11.500" cy="11.500" r="6" fill="#e0e0e0"/><path d="M4 12Q3 5 9 4q5-1 5 3 0 6-6 7-3 0-4-2z" fill="#111"/><path d="M6 6l6 6M12 6l-6 6" stroke="#e53935" stroke-width="2.200"/></svg></button>
      <button class="sort" aria-label="Sort ascending"><span>A</span><svg viewBox="0 0 8 10"><path d="M4 0v6" stroke="#7cb342" stroke-width="2"/><path d="M1 4.500h6L4 9z" fill="#7cb342"/></svg><small>Z</small></button>
      <button class="sort" aria-label="Sort descending"><span>Z</span><svg viewBox="0 0 8 10"><path d="M4 0v6" stroke="#f0a24a" stroke-width="2"/><path d="M1 4.500h6L4 9z" fill="#f0a24a"/></svg><small>A</small></button>
    </div>
    <ul class="names">
      <li><button class="picked"><svg><use href="#plane"/></svg>Inlet</button></li>
      <li><button><svg><use href="#plane"/></svg>Outlet</button></li>
      <li><button><svg><use href="#plane"/></svg>Nozzle-wall</button></li>
    </ul>
  </section>

  <div class="status">
    <div class="hint">
      <button class="tool" aria-label="Back"><svg width="16" height="12" viewBox="0 0 16 12"><path d="M0 11l5-8 1.500 2L14 .5l2 3-8 4.500 1 3z" fill="#fff"/></svg></button>
      <button class="tool" aria-label="Forward"><svg width="16" height="12" viewBox="0 0 16 12"><path d="M16 0l-5 8-1.500-2L2 11.500l-2-3L8 4 7 1z" fill="#777"/></svg></button>
      <button class="tool talk" aria-label="Messages"><svg width="16" height="14" viewBox="0 0 16 14"><path d="M0 0h16v10h-2v3l-4-3H0z" fill="#fff"/></svg></button>
      <span>Select a face, then enter a resolution.</span>
    </div>
    <span>Face</span>
    <div class="status-tools">
      <button class="tool on boxed" aria-label="Selection filter"><svg width="18" height="18" viewBox="0 0 18 18"><path d="M1 2l5-2v14l-5 1z" fill="#f0a24a"/><path d="M6 1h6v15H6z" fill="#d98a35"/><path d="M8 6l4 0 5 6-5 5-5-6z" fill="#7cb342" stroke="#cde6b0"/></svg></button>
      <button class="tool" aria-label="Lasso"><svg width="18" height="18" viewBox="0 0 18 18"><path d="M1 0v12l3-3 2 5 2-1-2-4h4z" fill="#fff"/><circle cx="13.500" cy="9" r="3" fill="none" stroke="#fff" stroke-width="1.400"/><path d="M13 12q0 3-3 4" fill="none" stroke="#fff" stroke-width="1.400"/></svg></button>
      <button class="tool gap-l" aria-label="Up"><svg width="16" height="10" viewBox="0 0 16 10"><path d="M8 0l8 10H0z" fill="#8a8a8a"/></svg></button>
      <button class="tool" aria-label="Down"><svg width="16" height="10" viewBox="0 0 16 10"><path d="M0 0h16L8 10z" fill="#6f6f6f"/></svg></button>
      <button class="tool gap-m" aria-label="Selection mode"><svg width="26" height="16" viewBox="0 0 26 16"><path d="M1 0v13l3-3 3 6 2-1-3-6 5-1z" fill="#7cb342" stroke="#dcecc8" stroke-width=".8"/><path d="M17 10l5-5 4 5z" fill="#fff"/></svg></button>
      <button class="tool" aria-label="Revert selection"><svg width="18" height="16" viewBox="0 0 18 16"><path d="M1 1v13l3-3 2 5 2-1-2-4 4-1z" fill="#fff"/><path d="M9 3h3q6 2 2 8" fill="none" stroke="#558b2f" stroke-width="2.600"/><path d="M12 0v6L7 3z" fill="#6fae3f"/></svg></button>
      <button class="tool gap-s" aria-label="Ruler"><svg width="30" height="14" viewBox="0 0 30 14"><path d="M1 1h15v11H1zM4 12V9M7 12v-2M10 12V9M13 12v-2" fill="none" stroke="#bbb" stroke-width="1.200"/><path d="M23 6h7l-7 7z" fill="#fff"/></svg></button>
    </div>
  </div>
</main>
<footer class="base"></footer>
</body>
</html>
```
FILE: styles.css
```css
* { box-sizing: border-box; }
body {
  margin: 0;
  min-height: 100vh;
  display: flex;
  flex-direction: column;
  background: #333;
  color: #eee;
  font: 13px/20px "Noto Sans CJK SC", "Noto Sans", sans-serif;
}
button {
  border: 0;
  padding: 0;
  background: none;
  color: inherit;
  font: inherit;
  cursor: pointer;
}
h1, h2, ul { margin: 0; padding: 0; }
ul { list-style: none; }
svg { display: block; flex: none; }
.defs { position: absolute; width: 0; height: 0; }
.tool { display: flex; align-items: center; justify-content: center; }
.on { background: #124b76; outline: 1px solid #2196f3; outline-offset: -1px; }
.white { color: #fff; }
.light { color: #ddd; }

/* title bar and tabs */
.top { background: #1c2f8c; }
.titlebar { display: flex; align-items: center; height: 30px; padding: 0 4px 4px 1px; }
.logo { width: 26px; height: 28px; margin-top: 3px; }
.undo { margin-left: 13px; }
.redo { margin-left: 6px; }
h1 { margin-left: 22px; font-size: 13px; font-weight: 700; color: #fff; }
.warn { margin-left: 8px; }
.window-tools { display: flex; gap: 12px; margin-left: auto; }
.window-tools .min { margin-left: 10px; }
.tabs { display: flex; align-items: center; height: 26px; padding: 0 4px 0 6px; }
.menu { margin-right: 8px; }
.tab {
  position: relative;
  isolation: isolate;
  display: flex;
  align-items: center;
  gap: 4px;
  height: 26px;
  padding: 0 22px;
  margin-right: -9px;
  font-size: 15px;
  font-variant: small-caps;
  background: #060d33;
  clip-path: polygon(11px 0, calc(100% - 11px) 0, 100% 100%, 0 100%);
}
.tab::before {
  content: "";
  position: absolute;
  z-index: -1;
  inset: 1px 0 0;
  background: #2b4bdb;
  clip-path: polygon(12px 0, calc(100% - 12px) 0, calc(100% - 1px) 100%, 1px 100%);
}
.tab.active { z-index: 1; background: #000; color: #fff; }
.tab.active::before { background: #000; }
.icon-only { padding: 0 20px; }
.add { margin-left: 17px; }
.release {
  margin: 0 12px 0 auto;
  font-style: italic;
  background: repeating-linear-gradient(90deg, #d8dc3c 0, #b4d860 24px, #6fc4b8 50px, #8fca60 70px, #d8dc3c 92px);
  background-clip: text;
  color: transparent;
}

/* ribbon */
.ribbon { display: flex; height: 107px; background: #000; }
.group { padding: 2px 4px 0; border-right: 1px solid #444; }
.group h2 {
  font-size: 15px;
  font-weight: 400;
  font-variant: small-caps;
  text-align: center;
  line-height: 19px;
}
.body { display: flex; height: 84px; }
.big {
  display: flex;
  flex-direction: column;
  align-items: center;
  width: 44px;
  padding-top: 6px;
}
.big > svg:first-child { height: 32px; margin-bottom: 4px; }
.big.low > svg:first-child { margin-bottom: 14px; }
.drop { margin-top: 12px; }
.smalls { display: grid; grid-template-rows: repeat(3, 28px); width: 28px; }
.smalls button, .icons7 button { display: grid; place-items: center; height: 28px; }
.smalls svg, .icons7 svg, .list svg { width: 18px; height: 18px; }
.icons7 { display: grid; grid-template-columns: repeat(7, 28px); }
.clipboard { padding-left: 8px; }
.clipboard .big { width: 46px; }
.clipboard .smalls { width: 27px; }
.mode .big { width: 52px; }
.edit .select { width: 48px; }
.intersect .big { width: 66px; }
.solids .big { width: 66px; }
.list { display: grid; grid-template-rows: repeat(3, 28px); padding: 0 6px 0 5px; }
.list button { display: flex; align-items: center; gap: 9px; white-space: nowrap; line-height: 18px; padding-bottom: 1px; }
.list.pair { grid-template-rows: 36px 36px; padding-left: 8px; }
.list.pair button { gap: 12px; }
.list.pair svg { width: 20px; height: 24px; }
.list button:disabled { color: #4c4c4c; }
.quad { display: grid; grid-template: 36px 36px / 36px 36px; }
.quad button { display: grid; place-items: center; }
.quad svg { width: 24px; height: 24px; }
.orange svg { fill: #ffb74d; }
.w { fill: none; stroke: #eee; stroke-width: 2px; }
.g { fill: #b4d795; stroke: #69993e; stroke-width: 1px; }
.go { fill: none; stroke: #69993e; stroke-width: 1px; }

/* viewport */
.viewport {
  position: relative;
  flex: 1;
  display: grid;
  grid-template: auto 1fr 19px / auto 1fr auto;
  overflow: hidden;
  background: radial-gradient(circle at 48% 50%, #616161 0, #4d4d4d 400px, #3a3a3a 850px, #303030 1100px);
}
.viewport > * { z-index: 1; }
.viewport > .scene { position: absolute; z-index: 0; width: 100%; height: 100%; }
.axis-names { font: 700 12px "Liberation Sans", sans-serif; }
.axis-names.small { font-size: 10px; }
.tree { grid-area: 1 / 1; text-shadow: 1px 1px 1px #111; }
.tree li { display: grid; grid-template-columns: 22px 18px 22px auto auto auto auto; justify-content: start; align-items: center; justify-items: center; height: 26px; }
.tree svg { width: 18px; height: 18px; }
.tree b { margin-left: 5px; font-weight: 400; color: #ddd; }
.tree strong { margin-left: 5px; color: #ff6d00; }
.tree .caret { width: 14px; height: 26px; }
.tree .doc { margin-left: 4px; }
.tree .sync { margin-left: 5px; }
.tree .branch { width: 32px; height: 26px; }
.branch path { fill: none; stroke: #aaa; stroke-width: 2px; }
.tree path.tri { fill: none; stroke: #e4e4e4; stroke-width: 1px; }
.tree .physics { display: flex; margin-top: 22px; padding-left: 22px; }
.physics .light { margin-left: 4px; }
.corner { grid-area: 1 / 3; align-self: start; display: flex; gap: 5px; }
.corner button:last-child { margin-left: 8px; }
.dial { grid-area: 2 / 1 / 4 / 2; align-self: end; }
.workflow {
  grid-area: 2 / 1 / 3 / 4;
  place-self: end center;
  display: grid;
  width: 192px;
  margin-left: 38px;
}
.sim { width: 156px; margin-bottom: 6px; text-align: center; color: #bbb; text-shadow: 1px 1px 1px #111; }
.hexes { margin: 0 0 8px 48px; }
.stage { display: flex; height: 25px; }
.model {
  width: 157px;
  background: #377dea;
  color: #0b1020;
  font-size: 19px;
  font-variant: small-caps;
  clip-path: polygon(11px 0, calc(100% - 11px) 0, 100% 100%, 0 100%);
}
.next {
  display: grid;
  place-items: center;
  width: 46px;
  margin-left: -11px;
  background: #0a0a0a;
  clip-path: polygon(0 0, calc(100% - 11px) 0, 100% 100%, 11px 100%);
}

/* floating window */
.panel {
  position: absolute;
  right: 467px;
  bottom: 19px;
  width: 202px;
  height: 251px;
  padding: 2px 5px;
  border: 1px solid #777;
  background: #0a0a0a;
}
.panel::after {
  content: "";
  position: absolute;
  right: 0;
  bottom: 0;
  border: 4px solid transparent;
  border-right-color: #fff;
  border-bottom-color: #fff;
}
.panel-head { display: flex; justify-content: space-between; }
.panel-head h2 { font-size: 14px; line-height: 20px; color: #fff; }
.panel-tools { display: flex; gap: 10px; width: 130px; margin: 13px 5px 12px; padding-bottom: 7px; border-bottom: 1px solid #444; }
.panel-tools svg { width: 18px; height: 18px; }
.sort { display: grid; grid-template: 9px 9px / 10px 8px; width: 18px; height: 18px; }
.sort span { grid-row: 1 / 3; font-size: 13px; line-height: 12px; }
.sort svg { width: 8px; height: 10px; }
.sort small { font-size: 8px; line-height: 9px; }
.names button { display: flex; align-items: center; gap: 10px; height: 26px; padding: 0 4px; color: #ddd; }
.names svg { width: 18px; height: 18px; }
.names .picked { width: 93px; background: #444; outline: 1px solid #ffd400; outline-offset: -1px; }

/* status line */
.status {
  grid-area: 3 / 1 / 4 / 4;
  display: grid;
  grid-template-columns: 1229fr 313fr 375fr;
  align-items: center;
  background: linear-gradient(#2228, #000 90%);
  color: #fff;
}
.hint { display: flex; align-items: center; gap: 10px; padding-left: 10px; }
.talk { margin: 0 3px 0 7px; }
.status-tools { display: flex; align-items: center; gap: 10px; }
.boxed { width: 20px; height: 19px; overflow: hidden; }
.gap-l { margin-left: 24px; }
.gap-m { margin-left: 8px; }
.gap-s { margin-left: 6px; }
.base { height: 16px; background: #1c2f8c; }
```
